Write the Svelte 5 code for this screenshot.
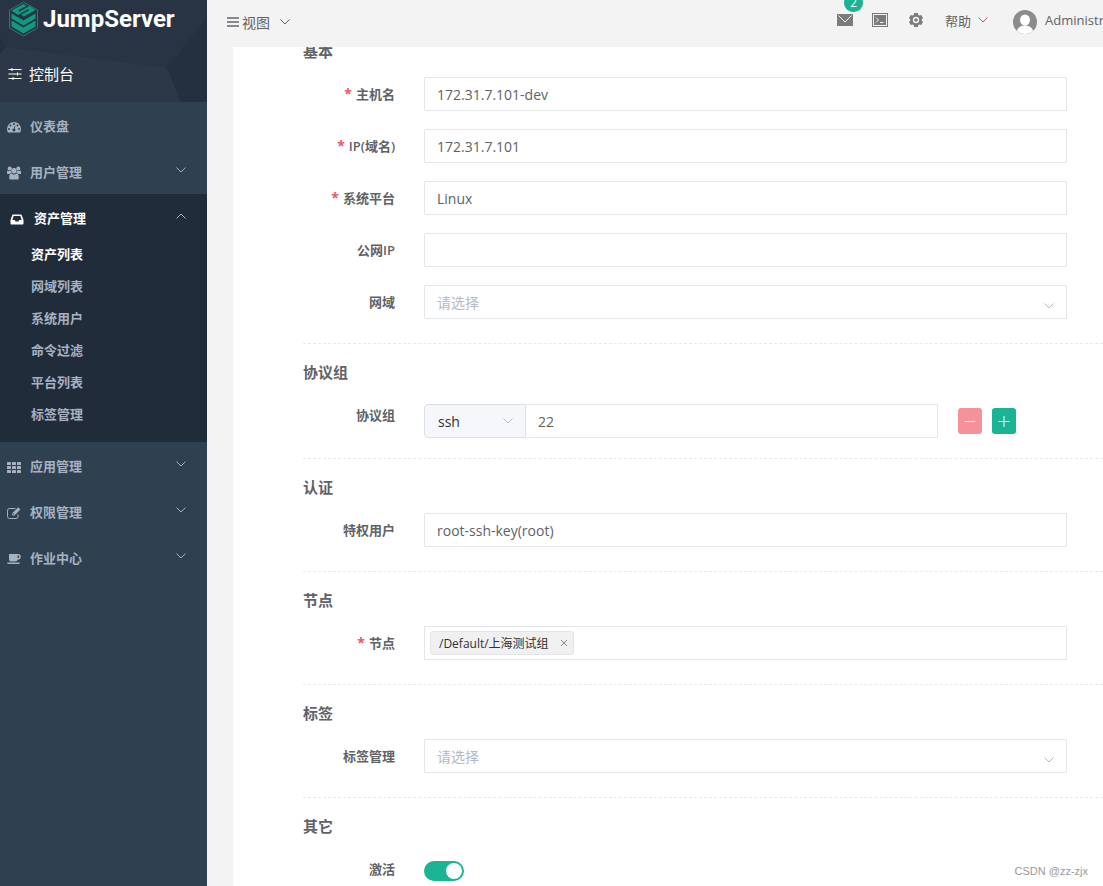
<script>
  let hostname = $state('172.31.7.101-dev');
  let ip = $state('172.31.7.101');
  let platform = $state('Linux');
  let publicIp = $state('');
  let domain = $state('');
  let protocol = $state('ssh');
  let port = $state('22');
  let adminUser = $state('root-ssh-key(root)');
  let nodes = $state(['/Default/上海测试组']);
  let label = $state('');
  let active = $state(true);

  const menu = [
    { icon: 'dashboard', name: '仪表盘' },
    { icon: 'users', name: '用户管理', group: true },
    {
      icon: 'inbox',
      name: '资产管理',
      group: true,
      open: true,
      children: ['资产列表', '网域列表', '系统用户', '命令过滤', '平台列表', '标签管理']
    },
    { icon: 'grid', name: '应用管理', group: true },
    { icon: 'edit', name: '权限管理', group: true },
    { icon: 'coffee', name: '作业中心', group: true }
  ];

  function removeNode(node) {
    nodes = nodes.filter((n) => n !== node);
  }
</script>

{#snippet chevron()}
  <svg class="chevron" viewBox="0 0 10 6" aria-hidden="true"><path d="M0.5 0.5 5 5 9.5 0.5" /></svg>
{/snippet}

{#snippet menuIcon(name)}
  <svg class="menu-icon" viewBox="0 0 14 14" aria-hidden="true">
    {#if name === 'dashboard'}
      <path fill-rule="evenodd" d="M7 2a7 7 0 0 0-7 7c0 1.300.3 2.300.8 3.200.1.200.300.300.500.300h11.400c.200 0 .400-.100.500-.300.500-.900.800-1.900.800-3.200a7 7 0 0 0-7-7ZM2 8a1 1 0 1 1 0 2 1 1 0 0 1 0-2Zm1.500-3.500a1 1 0 1 1 0 2 1 1 0 0 1 0-2ZM7 3a1 1 0 1 1 0 2 1 1 0 0 1 0-2Zm3.500 1.500a1 1 0 1 1 0 2 1 1 0 0 1 0-2ZM12 8a1 1 0 1 1 0 2 1 1 0 0 1 0-2ZM7.600 5.800l.8.200-.7 2.600a1.500 1.500 0 1 1-.8-.2Z" />
    {:else if name === 'users'}
      <circle cx="2.700" cy="2.500" r="2" />
      <circle cx="11.300" cy="2.500" r="2" />
      <path d="M0 8V6c0-1 .4-1.600.8-1.600 1 .8 2.400.9 3.300.3C3.900 6 4.300 6.700 4.700 7.200 3.700 7.300 3.100 7.600 2.700 8ZM14 8V6c0-1-.4-1.600-.8-1.600-1 .8-2.400.9-3.300.3.200 1.300-.200 2-.600 2.500 1 .1 1.600.4 2 .8Z" />
      <circle cx="7" cy="4.800" r="2.700" />
      <path d="M2.200 12c0-2.600.5-4.300 2.200-4.500 1.600 1.300 3.600 1.300 5.200 0 1.700.2 2.200 1.900 2.200 4.500 0 1-.7 1.600-1.600 1.600H3.800c-.9 0-1.600-.6-1.600-1.600Z" />
    {:else if name === 'inbox'}
      <path fill-rule="evenodd" d="M3 2.500h8c.4 0 .6.200.7.500L13.500 8v3.500c0 .6-.3.900-.9.900H1.400c-.6 0-.9-.3-.9-.9V8L2.300 3c.1-.3.300-.5.700-.5ZM3.700 4 2.300 8h2.500l.7 1.500h3L9.200 8h2.500l-1.400-4Z" />
    {:else if name === 'grid'}
      {#each [2, 6, 10] as y}
        {#each [0, 5, 10] as x}
          <rect {x} {y} width="4" height="3" rx="0.5" />
        {/each}
      {/each}
    {:else if name === 'edit'}
      <path class="line" d="M8.500 2.500H2.500a2 2 0 0 0-2 2v6a2 2 0 0 0 2 2h6.500a2 2 0 0 0 2-2V8.500" />
      <path fill-rule="evenodd" d="M11.200 1.300 13.400 3.500 7.500 9.500H5.200V7.200ZM6.200 7.600v.9h.9l.4-.4-.9-.9Z" />
    {:else}
      <path fill-rule="evenodd" d="M2 2h9a2.800 2.800 0 0 1 0 5.600h-.4a2 2 0 0 1-2 1.900H4a2 2 0 0 1-2-2Zm8.600 1.500v2.600h.4a1.300 1.300 0 0 0 0-2.600ZM0 10.500h13c0 1-.9 1.600-2 1.600H2c-1.100 0-2-.6-2-1.600Z" />
    {/if}
  </svg>
{/snippet}

<div class="app">
  <aside class="sidebar">
    <header class="sidebar-header">
      <svg class="facets" viewBox="0 0 207 102" preserveAspectRatio="none" aria-hidden="true">
        <path class="light" d="M0 54 5 47 167 68 181 102H0Z" />
        <path class="dark" d="M207 17 167 68 181 102H207ZM0 37 5 47 0 54Z" />
      </svg>
      <a class="brand" href="#home">
        <svg class="logo" viewBox="0 0 30 36" aria-hidden="true">
          <path class="frame" d="M15 1 29 9V27L15 35 1 27V9Z" />
          <path d="M3 9.500 15 3 18 4.700 9.500 9.500 11 10.500 21 5 27 9 15.500 15.500 12.500 13.800 21 9 19.500 8.200 9.500 14Z" />
          <path d="M3 12.500 15 19.500 27 12.500V17.500L15 24.500 3 17.500Z" />
          <path d="M3 19.500 15 26.500 27 19.500V25.500L15 32.500 3 25.500Z" />
        </svg>
        <span>JumpServer</span>
      </a>
      <a class="console" href="#console">
        <svg viewBox="0 0 14 14" aria-hidden="true">
          <path d="M0.500 2.500h13M0.500 7h13M0.500 11.500h13M4 1v3M9.500 5.500v3M5 10v3" />
        </svg>
        <span>控制台</span>
      </a>
    </header>

    <nav>
      {#each menu as item}
        <div class="menu-group" class:open={item.open}>
          <a class="menu-item" href="#{item.icon}">
            {@render menuIcon(item.icon)}
            <span>{item.name}</span>
            {#if item.group}
              {@render chevron()}
            {/if}
          </a>
          {#if item.children}
            <ul>
              {#each item.children as child, i}
                <li><a href="#{item.icon}-{i}" class:current={i === 0}>{child}</a></li>
              {/each}
            </ul>
          {/if}
        </div>
      {/each}
    </nav>
  </aside>

  <div class="main">
    <header class="navbar">
      <button class="view-switch" type="button">
        <svg class="bars" viewBox="0 0 12 10" aria-hidden="true"><path d="M0 1h12M0 5h12M0 9h12" /></svg>
        <span>视图</span>
        {@render chevron()}
      </button>

      <div class="tools">
        <button class="mail" type="button" aria-label="站内信">
          <svg viewBox="0 0 16 12" aria-hidden="true">
            <path class="solid" d="M0 0h16v12H0Z" />
            <path class="flap" d="M1.500 1.500 8 8l6.500-6.500" />
          </svg>
          <span class="badge">2</span>
        </button>
        <button type="button" aria-label="Web终端">
          <svg class="terminal" viewBox="0 0 16 14" aria-hidden="true">
            <path class="solid" d="M0 0h16v14H0Z" />
            <path class="inner" d="M1.500 1.500h13v11h-13ZM4 4.500 6.500 7 4 9.500M8 9.500h3.500" />
          </svg>
        </button>
        <button type="button" aria-label="系统设置">
          <svg class="gear" viewBox="0 0 14 14" aria-hidden="true">
            <path fill-rule="evenodd" d="M5.200 0h3.600l.5 1.900 1 .6 1.900-.6L14 5.100 12.700 6.400v1.200L14 8.900l-1.800 3.200-1.900-.6-1 .6-.5 1.900H5.200l-.5-1.900-1-.6-1.900.6L0 8.900l1.300-1.300V6.400L0 5.100l1.800-3.200 1.900.6 1-.6ZM7 3.800a3.200 3.200 0 1 0 0 6.400 3.200 3.200 0 0 0 0-6.400Zm0 1.400a1.800 1.800 0 1 1 0 3.600 1.800 1.800 0 0 1 0-3.600Z" />
          </svg>
        </button>
        <button class="help" type="button">帮助 {@render chevron()}</button>
        <button class="account" type="button">
          <svg class="avatar" viewBox="0 0 24 24" aria-hidden="true">
            <circle class="ring" cx="12" cy="12" r="12" />
            <path d="M4 21C5 17 8.500 15.500 12 15.500S19 17 20 21A12 12 0 0 1 4 21Z" />
            <ellipse cx="12" cy="10" rx="5" ry="5.500" />
          </svg>
          <span>Administrator</span>
        </button>
      </div>
    </header>

    <div class="content">
      <form class="panel" onsubmit={(e) => e.preventDefault()}>
        <section>
          <h3>基本</h3>
          <div class="row">
            <label class="required" for="hostname">主机名</label>
            <input id="hostname" type="text" bind:value={hostname} />
          </div>
          <div class="row">
            <label class="required" for="ip">IP(域名)</label>
            <input id="ip" type="text" bind:value={ip} />
          </div>
          <div class="row">
            <label class="required" for="platform">系统平台</label>
            <input id="platform" type="text" bind:value={platform} />
          </div>
          <div class="row">
            <label for="public-ip">公网IP</label>
            <input id="public-ip" type="text" bind:value={publicIp} />
          </div>
          <div class="row">
            <label for="domain">网域</label>
            <div class="select">
              <select id="domain" class:empty={!domain} bind:value={domain}>
                <option value="">请选择</option>
              </select>
              {@render chevron()}
            </div>
          </div>
        </section>

        <section class="protocols">
          <h3>协议组</h3>
          <div class="row">
            <label for="port">协议组</label>
            <div class="protocol-line">
              <div class="input-group">
                <div class="select">
                  <select aria-label="协议" bind:value={protocol}>
                    <option>ssh</option>
                    <option>telnet</option>
                  </select>
                  {@render chevron()}
                </div>
                <input id="port" type="text" bind:value={port} />
              </div>
              <div class="actions">
                <button class="remove" type="button" aria-label="删除" disabled>
                  <svg viewBox="0 0 12 12" aria-hidden="true"><path d="M0.500 6.500h11" /></svg>
                </button>
                <button class="add" type="button" aria-label="添加">
                  <svg viewBox="0 0 12 12" aria-hidden="true"><path d="M0.500 6.500h11M6 1v11" /></svg>
                </button>
              </div>
            </div>
          </div>
        </section>

        <section>
          <h3>认证</h3>
          <div class="row">
            <label for="admin-user">特权用户</label>
            <input id="admin-user" type="text" bind:value={adminUser} />
          </div>
        </section>

        <section>
          <h3>节点</h3>
          <div class="row">
            <label class="required" for="nodes">节点</label>
            <div class="tags">
              {#each nodes as node}
                <span class="tag">
                  {node}
                  <button type="button" aria-label="移除" onclick={() => removeNode(node)}>
                    <svg viewBox="0 0 8 8" aria-hidden="true"><path d="M1 1l6 6M7 1 1 7" /></svg>
                  </button>
                </span>
              {/each}
              <input id="nodes" type="text" />
            </div>
          </div>
        </section>

        <section>
          <h3>标签</h3>
          <div class="row">
            <label for="labels">标签管理</label>
            <div class="select">
              <select id="labels" class:empty={!label} bind:value={label}>
                <option value="">请选择</option>
              </select>
              {@render chevron()}
            </div>
          </div>
        </section>

        <section>
          <h3>其它</h3>
          <div class="row">
            <label for="active">激活</label>
            <input id="active" class="switch" type="checkbox" role="switch" bind:checked={active} />
          </div>
        </section>
      </form>
    </div>
  </div>

  <div class="watermark">CSDN @zz-zjx</div>
</div>

<style>
  :global(body) {
    margin: 0;
  }

  .app {
    position: relative;
    display: flex;
    height: 100vh;
    overflow: hidden;
    background: #f3f3f3;
    color: #606266;
    font-family: 'Open Sans', 'Noto Sans CJK SC', sans-serif;
    font-size: 13px;
  }

  .app *,
  .app *::before {
    box-sizing: border-box;
  }

  a {
    color: inherit;
    text-decoration: none;
  }

  button {
    padding: 0;
    border: 0;
    background: none;
    color: inherit;
    font: inherit;
    cursor: pointer;
  }

  svg {
    display: block;
    flex: none;
  }

  .chevron {
    width: 10px;
    height: 6px;
    fill: none;
    stroke: currentColor;
  }

  /* sidebar */
  .sidebar {
    flex: none;
    width: 207px;
    background: #2f4050;
    color: #a7b1c2;
    font-weight: 600;
  }

  .sidebar-header {
    position: relative;
    height: 102px;
    background: #283444;
    color: #fff;
  }

  .facets {
    position: absolute;
    inset: 0;
    width: 100%;
    height: 100%;
  }

  .facets .light {
    fill: #2c3848;
  }

  .facets .dark {
    fill: #243040;
  }

  .brand {
    position: relative;
    display: flex;
    align-items: center;
    gap: 4px;
    height: 38px;
    padding-left: 8px;
    font-family: Roboto, sans-serif;
    font-size: 24px;
    font-weight: 700;
  }

  .logo {
    width: 31px;
    height: 36px;
    fill: #0f9b7e;
  }

  .logo .frame {
    fill: none;
    stroke: #2c7a73;
  }

  .console {
    position: relative;
    display: flex;
    align-items: center;
    gap: 7px;
    height: 72px;
    padding-left: 8px;
    font-size: 15px;
    font-weight: 400;
    line-height: 20px;
  }

  .console svg {
    width: 14px;
    height: 14px;
    fill: none;
    stroke: #fff;
  }

  .menu-item {
    display: flex;
    align-items: center;
    gap: 9px;
    height: 46px;
    padding: 3px 21px 0 7px;
    line-height: 20px;
  }

  .menu-item span {
    padding-bottom: 2px;
  }

  .menu-item .chevron {
    margin: 0 0 6px auto;
  }

  .menu-icon {
    width: 14px;
    height: 14px;
    fill: currentColor;
  }

  .menu-icon .line {
    fill: none;
    stroke: currentColor;
  }

  .open {
    padding-bottom: 12px;
    background: #212c3b;
  }

  .open .menu-item {
    gap: 10px;
    padding-left: 10px;
    color: #fff;
  }

  .open .chevron {
    color: #a7b1c2;
    transform: rotate(180deg);
  }

  ul {
    margin: -2px 0 0;
    padding: 0;
    list-style: none;
  }

  li a {
    display: block;
    padding-left: 31px;
    line-height: 32px;
  }

  .current {
    color: #fff;
  }

  /* top bar */
  .main {
    display: flex;
    flex: 1;
    flex-direction: column;
    min-width: 0;
  }

  .navbar {
    display: flex;
    flex: none;
    justify-content: space-between;
    height: 47px;
    padding-left: 20px;
    overflow: hidden;
  }

  .view-switch {
    display: flex;
    align-items: center;
    gap: 3px;
    height: 44px;
    font-size: 14px;
  }

  .view-switch .chevron {
    margin-left: 7px;
  }

  .bars {
    width: 12px;
    height: 10px;
    stroke: #85888e;
    stroke-width: 2;
  }

  .tools {
    display: flex;
    align-items: center;
    height: 40px;
    margin-right: -26px;
  }

  .tools svg {
    fill: #7b7b7b;
  }

  .tools .chevron {
    fill: none;
  }

  .mail {
    position: relative;
    margin-right: 19px;
  }

  .mail svg {
    width: 16px;
    height: 12px;
  }

  .mail .flap,
  .terminal .inner {
    fill: none;
    stroke: #f3f3f3;
  }

  .badge {
    position: absolute;
    top: -20px;
    left: 7px;
    width: 19px;
    height: 18px;
    border-radius: 9px;
    background: #1ab394;
    color: #fff;
    font-size: 12px;
    line-height: 18px;
  }

  .terminal {
    width: 16px;
    height: 14px;
    margin-right: 21px;
  }

  .gear {
    width: 14px;
    height: 14px;
    margin-right: 22px;
  }

  .help {
    display: flex;
    align-items: center;
    gap: 7px;
    height: 38px;
    margin-right: 25px;
  }

  .help .chevron {
    color: #c0605a;
  }

  .account {
    display: flex;
    align-items: center;
    gap: 8px;
  }

  .avatar {
    width: 24px;
    height: 24px;
    margin-top: 4px;
  }

  .tools .avatar {
    fill: #fff;
  }

  .avatar .ring {
    fill: #8c8c8c;
  }

  /* form */
  .content {
    flex: 1;
    min-height: 0;
    margin-left: 26px;
    overflow: hidden;
    background: #fff;
  }

  .panel {
    margin-top: -25px;
    padding-left: 70px;
  }

  section {
    padding-bottom: 24px;
    border-top: 1px dashed #e7eaec;
  }

  h3 {
    margin: 0;
    padding: 18px 0 16px;
    font-size: 15px;
    font-weight: 600;
    line-height: 20px;
  }

  .row {
    display: grid;
    grid-template-columns: 92px minmax(0, 1fr);
    gap: 29px;
    padding-right: 36px;
  }

  .row + .row {
    margin-top: 18px;
  }

  label {
    height: 34px;
    font-weight: 600;
    line-height: 34px;
    text-align: right;
  }

  .required::before {
    content: '*';
    margin-right: 4px;
    color: #ed5565;
    font-size: 14px;
    font-weight: 700;
  }

  input[type='text'],
  select {
    width: 100%;
    height: 34px;
    margin: 0;
    padding: 0 12px;
    border: 1px solid #e5e6e7;
    border-radius: 1px;
    outline: 0;
    background: #fff;
    color: #606266;
    font: inherit;
    font-size: 14px;
  }

  .select {
    position: relative;
  }

  select {
    appearance: none;
  }

  .empty {
    color: #b4b9c4;
  }

  .select .chevron {
    position: absolute;
    top: 18px;
    right: 13px;
    color: #b4b9c4;
    pointer-events: none;
  }

  .protocols {
    padding-bottom: 20px;
  }

  .protocol-line {
    display: grid;
    grid-template-columns: 4fr 1fr;
    align-items: center;
    margin-top: 6px;
  }

  .input-group {
    display: flex;
  }

  .input-group .select {
    flex: none;
    width: 102px;
  }

  .input-group select {
    padding-left: 13px;
    border-color: #dcdfe6;
    border-radius: 4px 0 0 4px;
    background: #f5f7fa;
    color: #303133;
  }

  .input-group .chevron {
    top: 14px;
  }

  .input-group input[type='text'] {
    border-left: 0;
  }

  .actions {
    display: flex;
    gap: 10px;
    padding-left: 20px;
  }

  .actions button {
    display: grid;
    place-items: center;
    width: 24px;
    height: 26px;
    border-radius: 3px;
    background: #1ab394;
  }

  .actions .remove {
    background: #f6909a;
  }

  .actions svg {
    width: 12px;
    height: 12px;
    stroke: #fff;
  }

  .tags {
    display: flex;
    align-items: center;
    height: 34px;
    padding: 0 5px;
    border: 1px solid #e5e6e7;
  }

  .tags input[type='text'] {
    flex: 1;
    width: 0;
    height: 30px;
    border: 0;
  }

  .tag {
    display: flex;
    flex: none;
    align-items: center;
    gap: 11px;
    height: 24px;
    padding: 0 5px 0 8px;
    border: 1px solid #e4e4e6;
    border-radius: 3px;
    background: #f0f0f0;
    color: #303133;
    font-size: 12px;
  }

  .tag svg {
    width: 8px;
    height: 8px;
    stroke: #85888e;
  }

  .switch {
    appearance: none;
    width: 40px;
    height: 20px;
    margin: 9px 0 0;
    border-radius: 10px;
    background: #dcdfe6;
  }

  .switch::before {
    content: '';
    display: block;
    width: 16px;
    height: 16px;
    margin: 2px;
    border-radius: 50%;
    background: #fff;
  }

  .switch:checked {
    background: #1ab394;
  }

  .switch:checked::before {
    margin-left: 22px;
  }

  .watermark {
    position: absolute;
    right: 15px;
    bottom: 9px;
    color: #999;
    font-family: 'Liberation Sans', sans-serif;
    font-size: 11px;
  }
</style>
